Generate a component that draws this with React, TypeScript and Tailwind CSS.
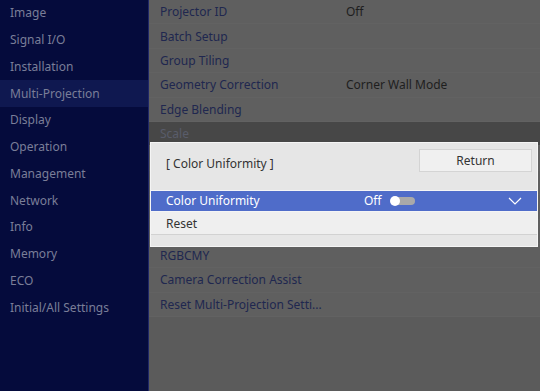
import React from 'react'

const menu = [
  'Image',
  'Signal I/O',
  'Installation',
  'Multi-Projection',
  'Display',
  'Operation',
  'Management',
  'Network',
  'Info',
  'Memory',
  'ECO',
  'Initial/All Settings',
]

const rows: { label: string; value?: string }[] = [
  { label: 'Projector ID', value: 'Off' },
  { label: 'Batch Setup' },
  { label: 'Group Tiling' },
  { label: 'Geometry Correction', value: 'Corner Wall Mode' },
  { label: 'Edge Blending' },
  { label: 'Scale' },
  { label: '' },
  { label: '' },
  { label: '' },
  { label: '' },
  { label: 'RGBCMY' },
  { label: 'Camera Correction Assist' },
  { label: 'Reset Multi-Projection Setti...' },
]

export default function App() {
  return (
    <div
      className="w-[540px] h-[391px] flex overflow-hidden text-[12px]"
      style={{ fontFamily: '"Noto Sans", "Open Sans", sans-serif' }}
    >
      {/* Side menu */}
      <div className="w-[149px] shrink-0 bg-[#050b3c] border-r border-[#1f2768] flex flex-col">
        {menu.map((m) => (
          <div
            key={m}
            className={
              'h-[26.75px] flex items-center pl-[10px] text-[#7a7e98] ' +
              (m === 'Multi-Projection' ? 'bg-[#0f1850]' : '')
            }
          >
            {m}
          </div>
        ))}
      </div>

      {/* Content */}
      <div className="relative flex-1 bg-[#5b5b5b] flex flex-col">
        {rows.map((r, i) => (
          <div
            key={i}
            className={
              'h-[24.4px] shrink-0 flex items-center pl-[11px] pt-[1px] border-b border-[#626262] ' +
              (r.label === 'Scale'
                ? 'bg-[#474747] text-[#595c6a]'
                : 'bg-[#5f5f5f] text-[#20274f]')
            }
          >
            <span className="w-[186px] truncate">{r.label}</span>
            {r.value && <span className="text-[#1e1e1e]">{r.value}</span>}
          </div>
        ))}

        {/* Dialog */}
        <div className="absolute left-[1px] top-[142px] w-[388px] h-[105px] bg-[#e6e6e6] border border-[#f5f5f5] flex flex-col">
          <div className="h-[47px] flex items-start justify-between pl-[15px] pr-[5px] pt-[6px]">
            <span className="mt-[6px] text-[#333333]">[ Color Uniformity ]</span>
            <button className="w-[113px] h-[23px] bg-[#f0f0f0] border border-[#d4d4d4] text-[#333333] flex items-center justify-center">
              Return
            </button>
          </div>
          <div className="h-[22px] bg-[#4f6cc9] border-y border-[#f5f5f5] flex items-center pl-[15px] text-white">
            <span className="w-[198px]">Color Uniformity</span>
            <span>Off</span>
            <span className="relative ml-[9px] w-[24px] h-[8px] rounded-full bg-[#a9a9a9]">
              <span className="absolute left-[-1px] top-[-1px] w-[10px] h-[10px] rounded-full bg-white" />
            </span>
            <svg
              className="ml-[93px]"
              width="14"
              height="8"
              viewBox="0 0 14 8"
              fill="none"
              stroke="white"
              strokeWidth="1.2"
            >
              <path d="M1 1 L7 7 L13 1" />
            </svg>
          </div>
          <div className="h-[23px] bg-[#efefef] border-b border-[#d2d2d2] flex items-center pl-[15px] pt-[1px] text-[#333333]">
            Reset
          </div>
        </div>
      </div>
    </div>
  )
}
